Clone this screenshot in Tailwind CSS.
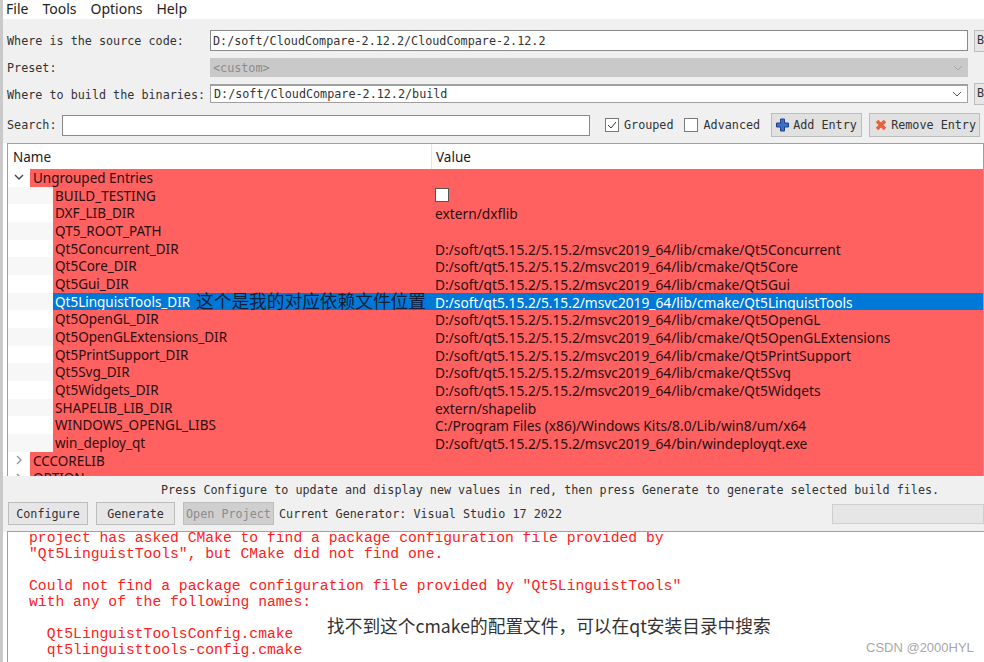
<!DOCTYPE html>
<html lang="zh">
<head>
  <meta charset="UTF-8">
  <title>CMake GUI</title>
  <script src="https://cdn.jsdelivr.net/npm/@tailwindcss/browser@4"></script>
</head>
<body class="bg-white">
  <div class="relative w-[984px] h-[662px] overflow-hidden border-l-[3px] border-[#c9c9c9] font-['Noto_Sans','Noto_Sans_CJK_SC',sans-serif] text-[13.5px] text-[#1a1a1a]">

    <!-- menu -->
    <nav class="flex h-[19px] items-center gap-[14px] pl-[3px] pb-[2px] bg-white text-[14px] text-[#222]">
      <span>File</span><span>Tools</span><span>Options</span><span>Help</span>
    </nav>

    <!-- top form -->
    <section class="h-[124px] bg-[#f0f0f0] pt-[11px] font-['DejaVu_Sans_Mono',monospace] text-[11.75px] text-[#333]">
      <div class="flex h-[21px] items-center pl-[4px]">
        <label class="w-[203px] shrink-0 pt-[2px]">Where is the source code:</label>
        <div class="flex h-full w-[758px] shrink-0 items-center border border-[#8a8a8a] bg-white pl-[2px] pt-[2px]">D:/soft/CloudCompare-2.12.2/CloudCompare-2.12.2</div>
        <button class="ml-[6px] h-[22px] w-[12px] shrink-0 overflow-hidden border border-[#bdbdbd] bg-[#e6e6e6] text-left pl-[2px]">B</button>
      </div>
      <div class="mt-[7px] flex h-[19px] items-center pl-[4px]">
        <label class="w-[203px] shrink-0 pt-[2px]">Preset:</label>
        <div class="flex h-full w-[758px] shrink-0 items-center justify-between bg-[#c9c9c9] pl-[3px] pr-[5px] text-[#8c8c8c]">
          <span class="pt-[2px]">&lt;custom&gt;</span>
          <svg width="10" height="6" viewBox="0 0 10 6" fill="none" stroke="#a8a8a8"><path d="M1 1l4 4 4-4"/></svg>
        </div>
      </div>
      <div class="mt-[7px] flex h-[19px] items-center pl-[4px]">
        <label class="w-[203px] shrink-0 pt-[4px]">Where to build the binaries:</label>
        <div class="flex h-full w-[758px] shrink-0 items-center justify-between border border-[#a0a0a0] border-t-2 bg-white pl-[3px] pr-[5px]">
          <span class="pt-[2px]">D:/soft/CloudCompare-2.12.2/build</span>
          <svg width="10" height="6" viewBox="0 0 10 6" fill="none" stroke="#555"><path d="M1 1l4 4 4-4"/></svg>
        </div>
        <button class="ml-[6px] h-[22px] w-[12px] shrink-0 overflow-hidden border border-[#bdbdbd] bg-[#e6e6e6] text-left pl-[2px]">B</button>
      </div>
      <div class="mt-[10px] flex h-[24px] items-center pl-[4px]">
        <label class="w-[55px] shrink-0 pt-[2px]">Search:</label>
        <div class="h-[21px] w-[528px] shrink-0 border border-[#8a8a8a] bg-white"></div>
        <span class="ml-[15px] flex h-[14px] w-[14px] shrink-0 items-center justify-center border border-[#7a7a7a] bg-white">
          <svg width="10" height="8" viewBox="0 0 10 8" fill="none" stroke="#333"><path d="M1 4l3 3 5-6"/></svg>
        </span>
        <span class="ml-[5px] shrink-0 pt-[2px]">Grouped</span>
        <span class="ml-[10px] h-[14px] w-[14px] shrink-0 border border-[#7a7a7a] bg-white"></span>
        <span class="ml-[6px] shrink-0 pt-[2px]">Advanced</span>
        <button class="ml-[11px] flex h-[24px] w-[91px] shrink-0 items-center gap-[4px] border border-[#bdbdbd] bg-[#e1e1e1] pl-[4px]">
          <svg width="13" height="14" viewBox="0 0 13 14"><path d="M4.5 1h4v4h4v4h-4v4h-4v-4h-4v-4h4z" fill="#3f6fc4" stroke="#1f3f8f"/></svg>
          <span class="pt-[2px]">Add Entry</span>
        </button>
        <button class="ml-[7px] flex h-[24px] w-[111px] shrink-0 items-center gap-[4px] border border-[#bdbdbd] bg-[#e1e1e1] pl-[5px]">
          <svg width="12" height="12" viewBox="0 0 12 12"><path d="M2 2l8 8M10 2l-8 8" stroke="#e8603c" stroke-width="3.4"/></svg>
          <span class="pt-[2px]">Remove Entry</span>
        </button>
      </div>
    </section>

    <!-- cache table -->
    <section class="ml-[4px] h-[334px] overflow-hidden border border-[#a0a0a0] bg-white">
      <div class="flex h-[25px] items-center">
        <div class="w-[424px] border-r border-[#e5e5e5] pl-[5px] leading-[25px] pt-px">Name</div>
        <div class="pl-[4px] pt-px">Value</div>
      </div>
      <div class="leading-[19.5px] text-[#2a1010]">
        <div class="flex h-[17.67px]">
          <div class="flex w-[22px] items-center justify-center bg-white"><svg width="10" height="7" viewBox="0 0 10 7" fill="none" stroke="#444" stroke-width="1.4"><path d="M1 1l4 4 4-4"/></svg></div>
          <div class="flex-1 bg-[#ff6060] pl-[3px]">Ungrouped Entries</div>
        </div>
        <div class="flex h-[17.67px]"><div class="w-[45px] bg-[#f7f7f7]"></div><div class="flex flex-1 bg-[#ff6060]"><div class="w-[379px] pl-[2px]">BUILD_TESTING</div><div class="flex items-center pl-[3px]"><span class="h-[14px] w-[14px] border border-[#555] bg-white"></span></div></div></div>
        <div class="flex h-[17.67px]"><div class="w-[45px] bg-white"></div><div class="flex flex-1 bg-[#ff6060]"><div class="w-[379px] pl-[2px]">DXF_LIB_DIR</div><div class="pl-[3px] text-[13.75px]">extern/dxflib</div></div></div>
        <div class="flex h-[17.67px]"><div class="w-[45px] bg-[#f7f7f7]"></div><div class="flex flex-1 bg-[#ff6060]"><div class="w-[379px] pl-[2px]">QT5_ROOT_PATH</div><div class="pl-[3px]"></div></div></div>
        <div class="flex h-[17.67px]"><div class="w-[45px] bg-white"></div><div class="flex flex-1 bg-[#ff6060]"><div class="w-[379px] pl-[2px]">Qt5Concurrent_DIR</div><div class="pl-[3px] text-[13.75px]">D:/soft/qt5.15.2/5.15.2/msvc2019_64/lib/cmake/Qt5Concurrent</div></div></div>
        <div class="flex h-[17.67px]"><div class="w-[45px] bg-[#f7f7f7]"></div><div class="flex flex-1 bg-[#ff6060]"><div class="w-[379px] pl-[2px]">Qt5Core_DIR</div><div class="pl-[3px] text-[13.75px]">D:/soft/qt5.15.2/5.15.2/msvc2019_64/lib/cmake/Qt5Core</div></div></div>
        <div class="flex h-[17.67px]"><div class="w-[45px] bg-white"></div><div class="flex flex-1 bg-[#ff6060]"><div class="w-[379px] pl-[2px]">Qt5Gui_DIR</div><div class="pl-[3px] text-[13.75px]">D:/soft/qt5.15.2/5.15.2/msvc2019_64/lib/cmake/Qt5Gui</div></div></div>
        <div class="flex h-[17.67px]"><div class="w-[45px] bg-[#f7f7f7]"></div><div class="flex flex-1 bg-[#0078d7] text-white"><div class="w-[379px] pl-[2px]">Qt5LinguistTools_DIR</div><div class="pl-[3px] text-[13.75px]">D:/soft/qt5.15.2/5.15.2/msvc2019_64/lib/cmake/Qt5LinguistTools</div></div></div>
        <div class="flex h-[17.67px]"><div class="w-[45px] bg-white"></div><div class="flex flex-1 bg-[#ff6060]"><div class="w-[379px] pl-[2px]">Qt5OpenGL_DIR</div><div class="pl-[3px] text-[13.75px]">D:/soft/qt5.15.2/5.15.2/msvc2019_64/lib/cmake/Qt5OpenGL</div></div></div>
        <div class="flex h-[17.67px]"><div class="w-[45px] bg-[#f7f7f7]"></div><div class="flex flex-1 bg-[#ff6060]"><div class="w-[379px] pl-[2px]">Qt5OpenGLExtensions_DIR</div><div class="pl-[3px] text-[13.75px]">D:/soft/qt5.15.2/5.15.2/msvc2019_64/lib/cmake/Qt5OpenGLExtensions</div></div></div>
        <div class="flex h-[17.67px]"><div class="w-[45px] bg-white"></div><div class="flex flex-1 bg-[#ff6060]"><div class="w-[379px] pl-[2px]">Qt5PrintSupport_DIR</div><div class="pl-[3px] text-[13.75px]">D:/soft/qt5.15.2/5.15.2/msvc2019_64/lib/cmake/Qt5PrintSupport</div></div></div>
        <div class="flex h-[17.67px]"><div class="w-[45px] bg-[#f7f7f7]"></div><div class="flex flex-1 bg-[#ff6060]"><div class="w-[379px] pl-[2px]">Qt5Svg_DIR</div><div class="pl-[3px] text-[13.75px]">D:/soft/qt5.15.2/5.15.2/msvc2019_64/lib/cmake/Qt5Svg</div></div></div>
        <div class="flex h-[17.67px]"><div class="w-[45px] bg-white"></div><div class="flex flex-1 bg-[#ff6060]"><div class="w-[379px] pl-[2px]">Qt5Widgets_DIR</div><div class="pl-[3px] text-[13.75px]">D:/soft/qt5.15.2/5.15.2/msvc2019_64/lib/cmake/Qt5Widgets</div></div></div>
        <div class="flex h-[17.67px]"><div class="w-[45px] bg-[#f7f7f7]"></div><div class="flex flex-1 bg-[#ff6060]"><div class="w-[379px] pl-[2px]">SHAPELIB_LIB_DIR</div><div class="pl-[3px] text-[13.75px]">extern/shapelib</div></div></div>
        <div class="flex h-[17.67px]"><div class="w-[45px] bg-white"></div><div class="flex flex-1 bg-[#ff6060]"><div class="w-[379px] pl-[2px]">WINDOWS_OPENGL_LIBS</div><div class="pl-[3px] text-[13.75px]">C:/Program Files (x86)/Windows Kits/8.0/Lib/win8/um/x64</div></div></div>
        <div class="flex h-[17.67px]"><div class="w-[45px] bg-[#f7f7f7]"></div><div class="flex flex-1 bg-[#ff6060]"><div class="w-[379px] pl-[2px]">win_deploy_qt</div><div class="pl-[3px] text-[13.75px]">D:/soft/qt5.15.2/5.15.2/msvc2019_64/bin/windeployqt.exe</div></div></div>
        <div class="flex h-[17.67px]">
          <div class="flex w-[22px] items-center justify-center bg-white"><svg width="7" height="10" viewBox="0 0 7 10" fill="none" stroke="#999" stroke-width="1.4"><path d="M1 1l4 4-4 4"/></svg></div>
          <div class="flex-1 bg-[#ff6060] pl-[3px]">CCCORELIB</div>
        </div>
        <div class="flex h-[17.67px]">
          <div class="flex w-[22px] items-center justify-center bg-white"><svg width="7" height="10" viewBox="0 0 7 10" fill="none" stroke="#999" stroke-width="1.4"><path d="M1 1l4 4-4 4"/></svg></div>
          <div class="flex-1 bg-[#ff6060] pl-[3px]">OPTION</div>
        </div>
      </div>
    </section>

    <!-- status and buttons -->
    <section class="-mt-px h-[56px] bg-[#f0f0f0] font-['DejaVu_Sans_Mono',monospace] text-[11.75px] text-[#333]">
      <p class="h-[26px] pl-[158px] leading-[28px]">Press Configure to update and display new values in red, then press Generate to generate selected build files.</p>
      <div class="flex h-[23px] items-center pl-[5px]">
        <button class="h-[23px] w-[80px] shrink-0 border border-[#bdbdbd] bg-[#e6e6e6] pt-[2px]">Configure</button>
        <button class="ml-[8px] h-[23px] w-[79px] shrink-0 border border-[#bdbdbd] bg-[#e6e6e6] pt-[2px]">Generate</button>
        <button class="ml-[8px] h-[23px] w-[91px] shrink-0 border border-[#bdbdbd] bg-[#cfcfcf] pt-[2px] text-[#8c8c8c]">Open Project</button>
        <span class="ml-[5px] shrink-0 pt-[2px]">Current Generator: Visual Studio 17 2022</span>
        <div class="ml-auto h-[20px] w-[152px] shrink-0 border border-[#cfcfcf] bg-[#e6e6e6]"></div>
      </div>
    </section>

    <!-- log output -->
    <section class="-mt-px ml-[4px] h-[132px] overflow-hidden border-t border-l border-[#a0a0a0] bg-white pl-[21px] font-['Liberation_Mono',monospace] text-[14.7px] leading-[16px] text-[#ff2020]">
      <div class="-mt-[2px] whitespace-pre">project has asked CMake to find a package configuration file provided by</div>
      <div class="whitespace-pre">"Qt5LinguistTools", but CMake did not find one.</div>
      <div class="whitespace-pre">&nbsp;</div>
      <div class="whitespace-pre">Could not find a package configuration file provided by "Qt5LinguistTools"</div>
      <div class="whitespace-pre">with any of the following names:</div>
      <div class="whitespace-pre">&nbsp;</div>
      <div class="whitespace-pre">  Qt5LinguistToolsConfig.cmake</div>
      <div class="whitespace-pre">  qt5linguisttools-config.cmake</div>
    </section>

    <!-- annotations on top of the screenshot -->
    <span class="absolute left-[193px] top-[288px] font-['Noto_Sans_CJK_SC',sans-serif] text-[17.7px] leading-[24px] text-[#10203a]">这个是我的对应依赖文件位置</span>
    <span class="absolute left-[324px] top-[613px] font-['Noto_Sans_CJK_SC',sans-serif] text-[17.7px] leading-[24px] text-[#333]">找不到这个cmake的配置文件，可以在qt安装目录中搜索</span>
    <span class="absolute left-[863px] top-[640px] font-['Liberation_Sans',sans-serif] text-[13px] leading-[16px] text-[#a8a8a8]">CSDN @2000HYL</span>
  </div>
</body>
</html>
